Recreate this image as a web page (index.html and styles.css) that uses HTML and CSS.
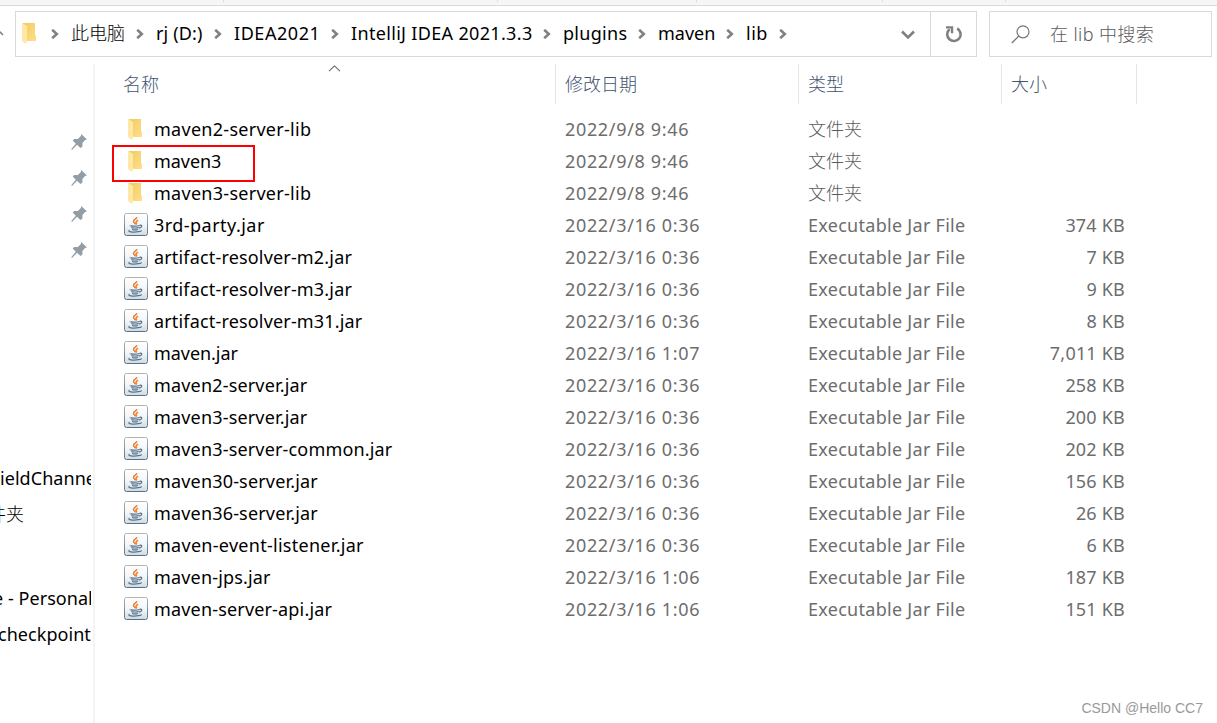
FILE: index.html
```html
<!DOCTYPE html>
<html lang="zh-CN">
<head>
	<meta charset="UTF-8">
	<meta name="viewport" content="width=device-width, initial-scale=1.0">
	<title>lib</title>
	<link rel="stylesheet" href="styles.css">
</head>
<body>
<!-- shared icons -->
<svg class="defs" width="0" height="0">
	<defs>
		<linearGradient id="fold" x1="0" y1="0" x2="1" y2="1">
			<stop offset="0" stop-color="#f0ca64"/><stop offset="1" stop-color="#ffdf86"/>
		</linearGradient>
		<linearGradient id="paper" x1="0" y1="0" x2="0" y2="1">
			<stop offset="0" stop-color="#ffffff"/><stop offset=".55" stop-color="#f2f5f7"/><stop offset="1" stop-color="#d0d9e0"/>
		</linearGradient>
		<linearGradient id="edge" x1="0" y1="0" x2="0" y2="1">
			<stop offset="0" stop-color="#a9b4bd"/><stop offset="1" stop-color="#5e7180"/>
		</linearGradient>
	</defs>
	<symbol id="folder" viewBox="0 0 14 21">
		<path d="M1 0h12v12l1 1v5H3z" fill="url(#fold)"/>
		<path d="M0 0l5 3v15l-1 3-4-3z" fill="#ffe8a6"/>
	</symbol>
	<symbol id="jar" viewBox="0 0 24 23">
		<rect x=".5" y=".5" width="23" height="22" rx="2" fill="url(#paper)" stroke="url(#edge)"/>
		<path d="M12.800 4c.5 1.700-3.600 2.700-3.300 4.500.2 1.200 1.700 1.700 1.900 2.900M14.200 7.200c-1.900.8-2.600 1.500-2 2.500.5.800.4 1.300-.1 1.900" fill="none" stroke="#e8802f" stroke-width="1.500"/>
		<path d="M6.300 12.400c-.8.8 7.500.9 9.100 0M7.300 14.500c1.500.7 5.900.6 7.500 0M8.100 16.400c1.500.6 4.300.6 5.900.1M15.500 12.300c3.600-.7 2.500 2.300-.5 2.900M5.500 17.300c-2.800 1.400 3.900 2.200 8.900 1.400 2.200-.3 3.300-.8 2.900-1.300" fill="none" stroke="#557792" stroke-width="1.200"/>
	</symbol>
	<symbol id="arrow" viewBox="0 0 8 10">
		<path d="M1.200 .8L5.800 5l-4.600 4.200" fill="none" stroke="#808080" stroke-width="2.600"/>
	</symbol>
	<symbol id="pin" viewBox="0 0 16 16">
		<path d="M10.200 0L16 5.400l-2 .5-2.600 3.100v3.500L9.500 14 6 10.700 1 16l-.8-.7 4.600-5.500L1.700 6.500 3.200 5h3.700l3-2.900z" fill="#929da5"/>
	</symbol>
</svg>

<div class="ribbon"><i></i><i></i><i></i><i></i><i></i></div>

<header class="toolbar">
	<svg class="up" width="4" height="8" viewBox="0 0 4 8"><path d="M-1 2l4 4" fill="none" stroke="#777" stroke-width="1.500"/></svg>
	<div class="address">
		<svg class="folder"><use href="#folder"/></svg>
		<svg class="arrow"><use href="#arrow"/></svg><span class="crumb c1 cn">此电脑</span>
		<svg class="arrow"><use href="#arrow"/></svg><span class="crumb c2">rj (D:)</span>
		<svg class="arrow"><use href="#arrow"/></svg><span class="crumb c3">IDEA2021</span>
		<svg class="arrow"><use href="#arrow"/></svg><span class="crumb c4">IntelliJ IDEA 2021.3.3</span>
		<svg class="arrow"><use href="#arrow"/></svg><span class="crumb c5">plugins</span>
		<svg class="arrow"><use href="#arrow"/></svg><span class="crumb c6">maven</span>
		<svg class="arrow"><use href="#arrow"/></svg><span class="crumb c7">lib</span>
		<svg class="arrow"><use href="#arrow"/></svg>
		<svg class="drop" width="14" height="10" viewBox="0 0 14 10"><path d="M1 1.500l6 6 6-6" fill="none" stroke="#808080" stroke-width="2.600"/></svg>
		<div class="refresh">
			<svg width="18" height="18" viewBox="0 0 18 18"><path d="M12.200 3.500A6.700 6.700 0 1 1 4.500 4.300" fill="none" stroke="#808080" stroke-width="2.600"/><path d="M1 1.200h7.200v7H5.800V3.600H1z" fill="#808080"/></svg>
		</div>
	</div>
	<div class="search">
		<svg width="19" height="19" viewBox="0 0 19 19"><circle cx="12" cy="6.800" r="6" fill="none" stroke="#777" stroke-width="1.200"/><path d="M7.800 11L.8 18" stroke="#777" stroke-width="1.300"/></svg>
		<span class="cn">在 lib 中搜索</span>
	</div>
</header>

<div class="main">
	<nav class="side">
		<div class="pins">
			<svg><use href="#pin"/></svg>
			<svg><use href="#pin"/></svg>
			<svg><use href="#pin"/></svg>
			<svg><use href="#pin"/></svg>
		</div>
		<div class="tree">
			<p class="t1">ieldChannel</p>
			<p class="t2 cn">件夹</p>
			<p class="t3">e - Personal</p>
			<p class="t4">checkpoint</p>
		</div>
	</nav>

	<section class="files">
		<div class="head cn">
			<span class="name">名称<svg class="sort" width="13" height="7" viewBox="0 0 13 7"><path d="M1 6.200L6.500 .9 12 6.200" fill="none" stroke="#666" stroke-width="1.100"/></svg></span>
			<span>修改日期</span>
			<span>类型</span>
			<span>大小</span>
		</div>
		<div class="row"><svg class="folder"><use href="#folder"/></svg><b class="lib">maven2-server-lib</b><span class="date">2022/9/8 9:46</span><span class="cn">文件夹</span><span></span></div>
		<div class="row marked"><svg class="folder"><use href="#folder"/></svg><b class="short">maven3</b><span class="date">2022/9/8 9:46</span><span class="cn">文件夹</span><span></span></div>
		<div class="row"><svg class="folder"><use href="#folder"/></svg><b class="lib">maven3-server-lib</b><span class="date">2022/9/8 9:46</span><span class="cn">文件夹</span><span></span></div>
		<div class="row"><svg><use href="#jar"/></svg><b class="wide">3rd-party.jar</b><span class="date">2022/3/16 0:36</span><span class="type">Executable Jar File</span><span class="size">374 KB</span></div>
		<div class="row"><svg><use href="#jar"/></svg><b>artifact-resolver-m2.jar</b><span class="date">2022/3/16 0:36</span><span class="type">Executable Jar File</span><span class="size">7 KB</span></div>
		<div class="row"><svg><use href="#jar"/></svg><b>artifact-resolver-m3.jar</b><span class="date">2022/3/16 0:36</span><span class="type">Executable Jar File</span><span class="size">9 KB</span></div>
		<div class="row"><svg><use href="#jar"/></svg><b>artifact-resolver-m31.jar</b><span class="date">2022/3/16 0:36</span><span class="type">Executable Jar File</span><span class="size">8 KB</span></div>
		<div class="row"><svg><use href="#jar"/></svg><b class="short">maven.jar</b><span class="date">2022/3/16 1:07</span><span class="type">Executable Jar File</span><span class="size">7,011 KB</span></div>
		<div class="row"><svg><use href="#jar"/></svg><b>maven2-server.jar</b><span class="date">2022/3/16 0:36</span><span class="type">Executable Jar File</span><span class="size">258 KB</span></div>
		<div class="row"><svg><use href="#jar"/></svg><b>maven3-server.jar</b><span class="date">2022/3/16 0:36</span><span class="type">Executable Jar File</span><span class="size">200 KB</span></div>
		<div class="row"><svg><use href="#jar"/></svg><b>maven3-server-common.jar</b><span class="date">2022/3/16 0:36</span><span class="type">Executable Jar File</span><span class="size">202 KB</span></div>
		<div class="row"><svg><use href="#jar"/></svg><b>maven30-server.jar</b><span class="date">2022/3/16 0:36</span><span class="type">Executable Jar File</span><span class="size">156 KB</span></div>
		<div class="row"><svg><use href="#jar"/></svg><b>maven36-server.jar</b><span class="date">2022/3/16 0:36</span><span class="type">Executable Jar File</span><span class="size">26 KB</span></div>
		<div class="row"><svg><use href="#jar"/></svg><b class="lib">maven-event-listener.jar</b><span class="date">2022/3/16 0:36</span><span class="type">Executable Jar File</span><span class="size">6 KB</span></div>
		<div class="row"><svg><use href="#jar"/></svg><b>maven-jps.jar</b><span class="date">2022/3/16 1:06</span><span class="type">Executable Jar File</span><span class="size">187 KB</span></div>
		<div class="row"><svg><use href="#jar"/></svg><b>maven-server-api.jar</b><span class="date">2022/3/16 1:06</span><span class="type">Executable Jar File</span><span class="size">151 KB</span></div>
	</section>
</div>

<div class="watermark">CSDN @Hello CC7</div>
</body>
</html>
```
FILE: styles.css
```css
* {
	box-sizing: border-box;
}

body {
	margin: 0;
	height: 723px;
	overflow: hidden;
	background: #fff;
	color: #000;
	font-family: "Noto Sans", "Noto Sans CJK SC", sans-serif;
	font-size: 18px;
	line-height: 32px;
}

svg {
	display: block;
	flex: none;
}

.defs {
	position: absolute;
}

.cn {
	font-weight: 300;
}

.ribbon {
	display: grid;
	grid-template-columns: 224px 274px 199px 186px 123px;
	height: 6px;
	padding-bottom: 3px;
	background: #f5f6f8;
	border-bottom: 1px solid #d9dadc;
}

.ribbon i {
	border-right: 1px solid #dcdde0;
}

.toolbar {
	display: flex;
	height: 51px;
	padding-top: 5px;
}

.up {
	margin: 18px 11px 0 0;
}

.address {
	display: flex;
	align-items: center;
	width: 962px;
	border: 1px solid #d9d9d9;
}

.folder {
	width: 14px;
	height: 21px;
}

.address .folder {
	margin: 0 15px 1px 6px;
}

.arrow {
	width: 8px;
	height: 10px;
	margin: 0 12px 0 0;
}

.crumb {
	flex: none;
	margin: -2px 11px 0 0;
	white-space: nowrap;
}

.c1 { width: 54px; }
.c2 { width: 47px; letter-spacing: .15px; }
.c3 { width: 86px; letter-spacing: .55px; }
.c4 { width: 181px; letter-spacing: .33px; }
.c5 { width: 64px; letter-spacing: .3px; }
.c6 { width: 57px; }
.c7 { width: 22px; letter-spacing: .5px; }

.drop {
	margin: 2px 15px 0 auto;
}

.refresh {
	display: flex;
	align-items: center;
	justify-content: center;
	width: 46px;
	height: 100%;
	border-left: 1px solid #d9d9d9;
}

.search {
	display: flex;
	align-items: center;
	width: 223px;
	margin-left: 12px;
	padding-left: 21px;
	border: 1px solid #d9d9d9;
	color: #5c5c5c;
}

.search span {
	margin-left: 20px;
	letter-spacing: .4px;
}

.main {
	display: flex;
	height: 659px;
	margin-top: 7px;
}

.side {
	width: 95px;
	border-right: 2px solid #f4f4f4;
}

.pins {
	display: grid;
	gap: 20px;
	padding: 70px 0 0 71px;
}

.pins svg {
	width: 16px;
	height: 16px;
}

.tree {
	width: 91px;
	margin-top: 202px;
	overflow: hidden;
	white-space: nowrap;
}

.tree p {
	height: 36px;
	margin: 0;
	line-height: 36px;
	letter-spacing: .05px;
}

.tree .t2 {
	margin: 0 0 48px -12px;
}

.tree .t3 {
	margin-left: -7px;
}

.tree .t4 {
	margin-left: -2px;
}

.files {
	width: 1042px;
}

.head {
	display: grid;
	grid-template-columns: 461px 243px 203px 135px;
	height: 40px;
	margin-bottom: 9px;
	line-height: 40px;
	color: #3f546f;
}

.head span {
	padding-left: 9px;
	border-right: 1px solid #e5e5e5;
}

.head .name {
	display: flex;
	padding-left: 28px;
}

.sort {
	margin: 1px 0 0 169px;
}

.row {
	display: grid;
	grid-template-columns: 30px 411px 243px 200px 117px;
	align-items: center;
	height: 32px;
	padding-left: 29px;
	color: #6d6d6d;
	white-space: nowrap;
}

.row .cn {
	color: #5c5c5c;
}

.row svg {
	width: 24px;
	height: 23px;
	margin-bottom: 2px;
}

.row .folder {
	width: 14px;
	height: 21px;
	margin: 1px 0 0 4px;
}

.row b {
	font-weight: 400;
	color: #000;
	letter-spacing: .17px;
}

.row .short {
	letter-spacing: -.05px;
}

.row .lib {
	letter-spacing: .28px;
}

.row .wide {
	letter-spacing: .46px;
}

.date {
	letter-spacing: .66px;
}

.type {
	letter-spacing: .28px;
}

.size {
	text-align: right;
	letter-spacing: .2px;
}

/* red box round the maven3 folder */
.marked {
	position: relative;
}

.marked::before {
	content: "";
	position: absolute;
	left: 17px;
	top: 0;
	width: 139px;
	height: 33px;
	border: 2px solid #f00;
}

.watermark {
	position: absolute;
	right: 14px;
	bottom: 5px;
	font: 14px/20px "Liberation Sans", sans-serif;
	color: #999;
}
```
